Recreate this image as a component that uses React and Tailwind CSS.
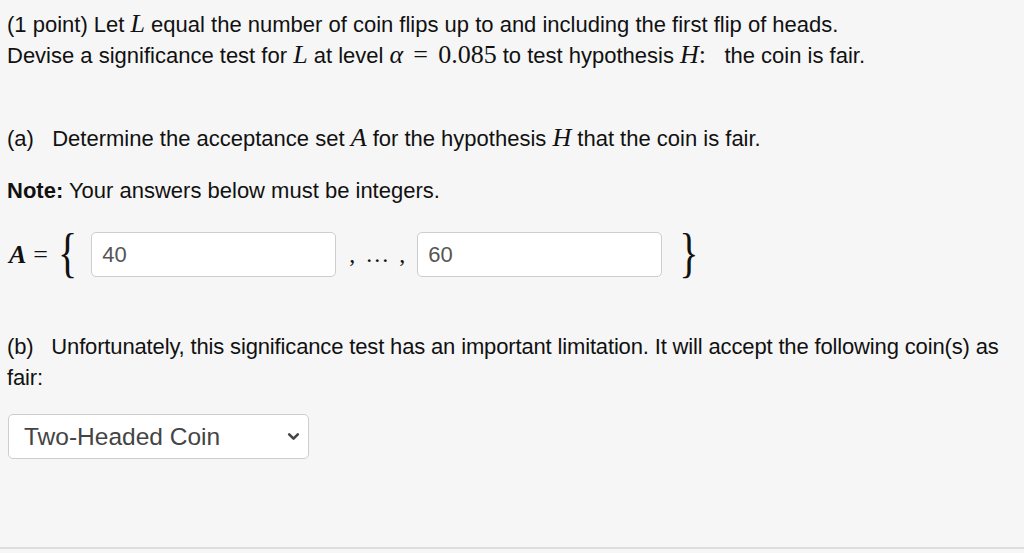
export default function App() {
  const sans = { fontFamily: '"Liberation Sans", Arial, Helvetica, sans-serif' };
  const serif = { fontFamily: '"Liberation Serif", "Times New Roman", serif' };
  const M = ({ children, className = "" }) => (
    <span className={`italic text-[26px] leading-none ${className}`} style={serif}>{children}</span>
  );
  const N = ({ children, className = "" }) => (
    <span className={`text-[26px] leading-none ${className}`} style={serif}>{children}</span>
  );
  return (
    <div className="w-[1024px] h-[553px] bg-[#f6f6f6] text-[#111] overflow-hidden flex flex-col" style={sans}>
      <div className="flex-1 pl-[7px] pt-[9px] text-[22px] leading-[31px]">
        <p>
          (1 point) Let <M>L</M> equal the number of coin flips up to and including the first flip of heads.
          <br />
          Devise a significance test for <M>L</M> at level <M>α</M> <N className="mx-[4px]">=</N> <N>0.085</N> to test hypothesis <M>H</M><N>:</N>&nbsp;&nbsp; the coin is fair.
        </p>
        <p className="mt-[52px]">
          (a)&nbsp;&nbsp; Determine the acceptance set <M>A</M> for the hypothesis <M>H</M> that the coin is fair.
        </p>
        <p className="mt-[21px]">
          <b>Note:</b> Your answers below must be integers.
        </p>
        <div className="mt-[26px] flex items-center h-[45px]">
          <span className="ml-[2px] flex items-center" style={serif}>
            <span className="italic font-bold text-[26px]">A</span>
            <span className="text-[26px] ml-[7px]">=</span>
            <span className="text-[40px] ml-[10px] inline-block scale-y-[1.35] leading-none -mt-[4px]">{"{"}</span>
          </span>
          <div className="ml-[14px] w-[245px] h-[45px] bg-white border border-[#cdcdcd] rounded-[5px] flex items-center pl-[10px] text-[22px] text-[#555]">40</div>
          <span className="ml-[13px] w-[68px] text-[24px] tracking-[2px]" style={serif}>, … ,</span>
          <div className="w-[245px] h-[45px] bg-white border border-[#cdcdcd] rounded-[5px] flex items-center pl-[10px] text-[22px] text-[#555]">60</div>
          <span className="ml-[17px] text-[40px] inline-block scale-y-[1.35] leading-none -mt-[4px]" style={serif}>{"}"}</span>
        </div>
        <p className="mt-[54px] tracking-[-0.15px]">
          (b)&nbsp;&nbsp; Unfortunately, this significance test has an important limitation. It will accept the following coin(s) as fair:
        </p>
        <div className="mt-[21px] ml-[1px] w-[301px] h-[45px] bg-white border border-[#cdcdcd] rounded-[5px] flex items-center justify-between pl-[15px] pr-[8px] text-[24.5px] text-[#444]">
          <span>Two-Headed Coin</span>
          <svg width="13" height="13" viewBox="0 0 12 12" fill="none" stroke="#444" strokeWidth="2.4" strokeLinecap="round" strokeLinejoin="round">
            <path d="M2 4 L6 8 L10 4" />
          </svg>
        </div>
      </div>
      <div className="h-[2px] bg-[#dedede] mb-[4px]" />
    </div>
  );
}
